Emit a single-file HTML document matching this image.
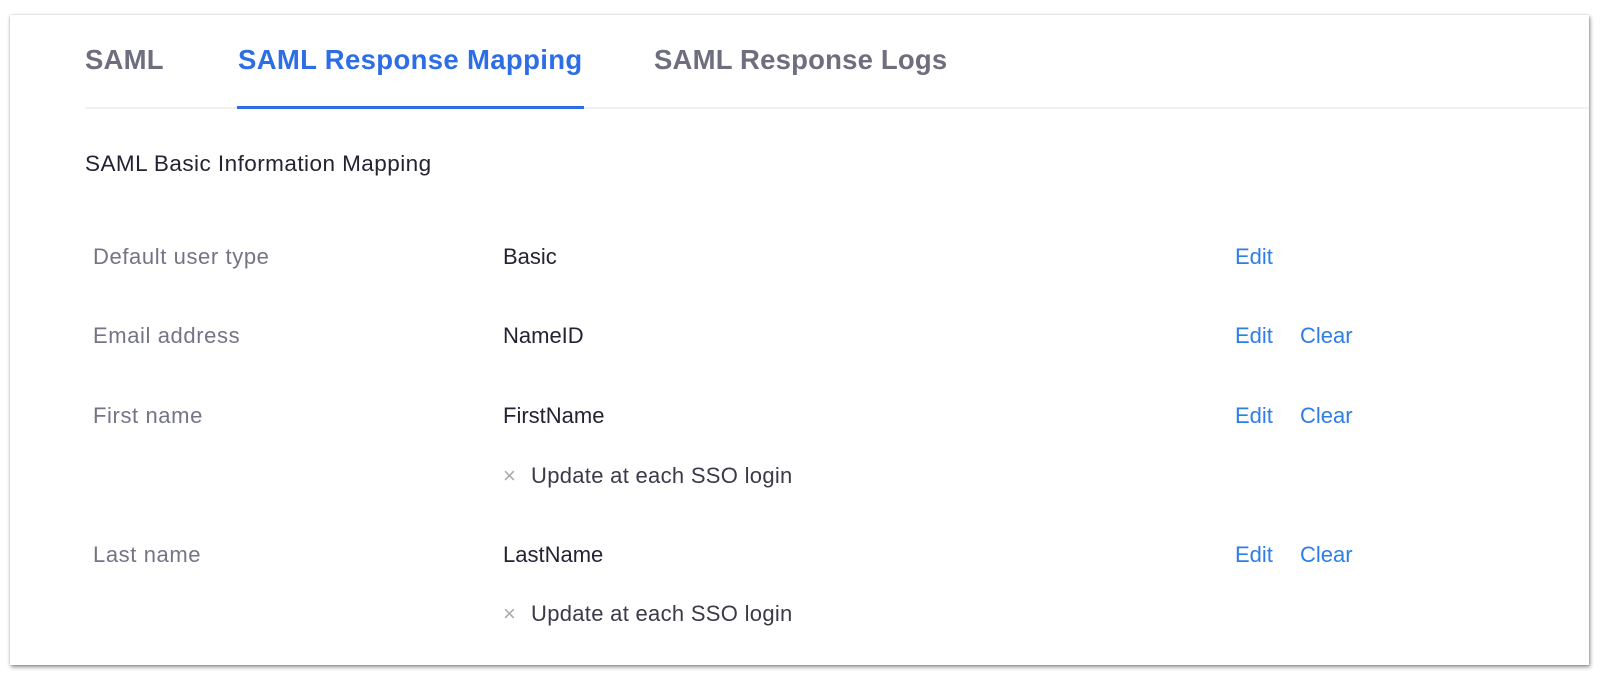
<!DOCTYPE html>
<html><head><meta charset="utf-8"><style>
html,body{margin:0;padding:0;background:#fff;width:1608px;height:682px;overflow:hidden}
body{font-family:"Liberation Sans",sans-serif;position:relative}
.card{position:absolute;left:10px;top:15px;width:1579px;height:650px;background:#fff;box-shadow:1px 2px 4px rgba(0,0,0,.45),0 0 2px rgba(0,0,0,.15)}
.t{position:absolute;white-space:nowrap}
.tab{font-size:27.5px;font-weight:bold;letter-spacing:0.2px;color:#6e6e7e;top:44px;line-height:32px}
.act{color:#2d6ee6}
.lbl{font-size:22px;letter-spacing:0.6px;color:#747487;line-height:26px}
.val{font-size:22px;color:#232333;line-height:26px}
.lnk{font-size:22px;color:#2d7ee8;line-height:26px}
</style></head><body>
<div class="card"></div>
<div class="t tab" style="left:85px">SAML</div>
<div class="t tab act" style="left:238px;letter-spacing:0.35px">SAML Response Mapping</div>
<div class="t tab" style="left:654px">SAML Response Logs</div>
<div style="position:absolute;left:85px;top:107px;width:1504px;height:2px;background:#f1f1f4"></div>
<div style="position:absolute;left:237px;top:106px;width:347px;height:3px;background:#2d6ee6"></div>
<div class="t val" style="left:85px;top:151px;font-size:22.5px;letter-spacing:0.45px">SAML Basic Information Mapping</div>

<div class="t lbl" style="left:93px;top:244px">Default user type</div>
<div class="t val" style="left:503px;top:244px">Basic</div>
<div class="t lnk" style="left:1235px;top:244px">Edit</div>

<div class="t lbl" style="left:93px;top:323px">Email address</div>
<div class="t val" style="left:503px;top:323px">NameID</div>
<div class="t lnk" style="left:1235px;top:323px">Edit</div>
<div class="t lnk" style="left:1300px;top:323px">Clear</div>

<div class="t lbl" style="left:93px;top:403px">First name</div>
<div class="t val" style="left:503px;top:403px">FirstName</div>
<div class="t lnk" style="left:1235px;top:403px">Edit</div>
<div class="t lnk" style="left:1300px;top:403px">Clear</div>
<div class="t val" style="left:503px;top:463px;color:#aaa">×</div>
<div class="t val" style="left:531px;top:463px;color:#3a3a48;letter-spacing:0.3px">Update at each SSO login</div>

<div class="t lbl" style="left:93px;top:542px">Last name</div>
<div class="t val" style="left:503px;top:542px">LastName</div>
<div class="t lnk" style="left:1235px;top:542px">Edit</div>
<div class="t lnk" style="left:1300px;top:542px">Clear</div>
<div class="t val" style="left:503px;top:601px;color:#aaa">×</div>
<div class="t val" style="left:531px;top:601px;color:#3a3a48;letter-spacing:0.3px">Update at each SSO login</div>
</body></html>
